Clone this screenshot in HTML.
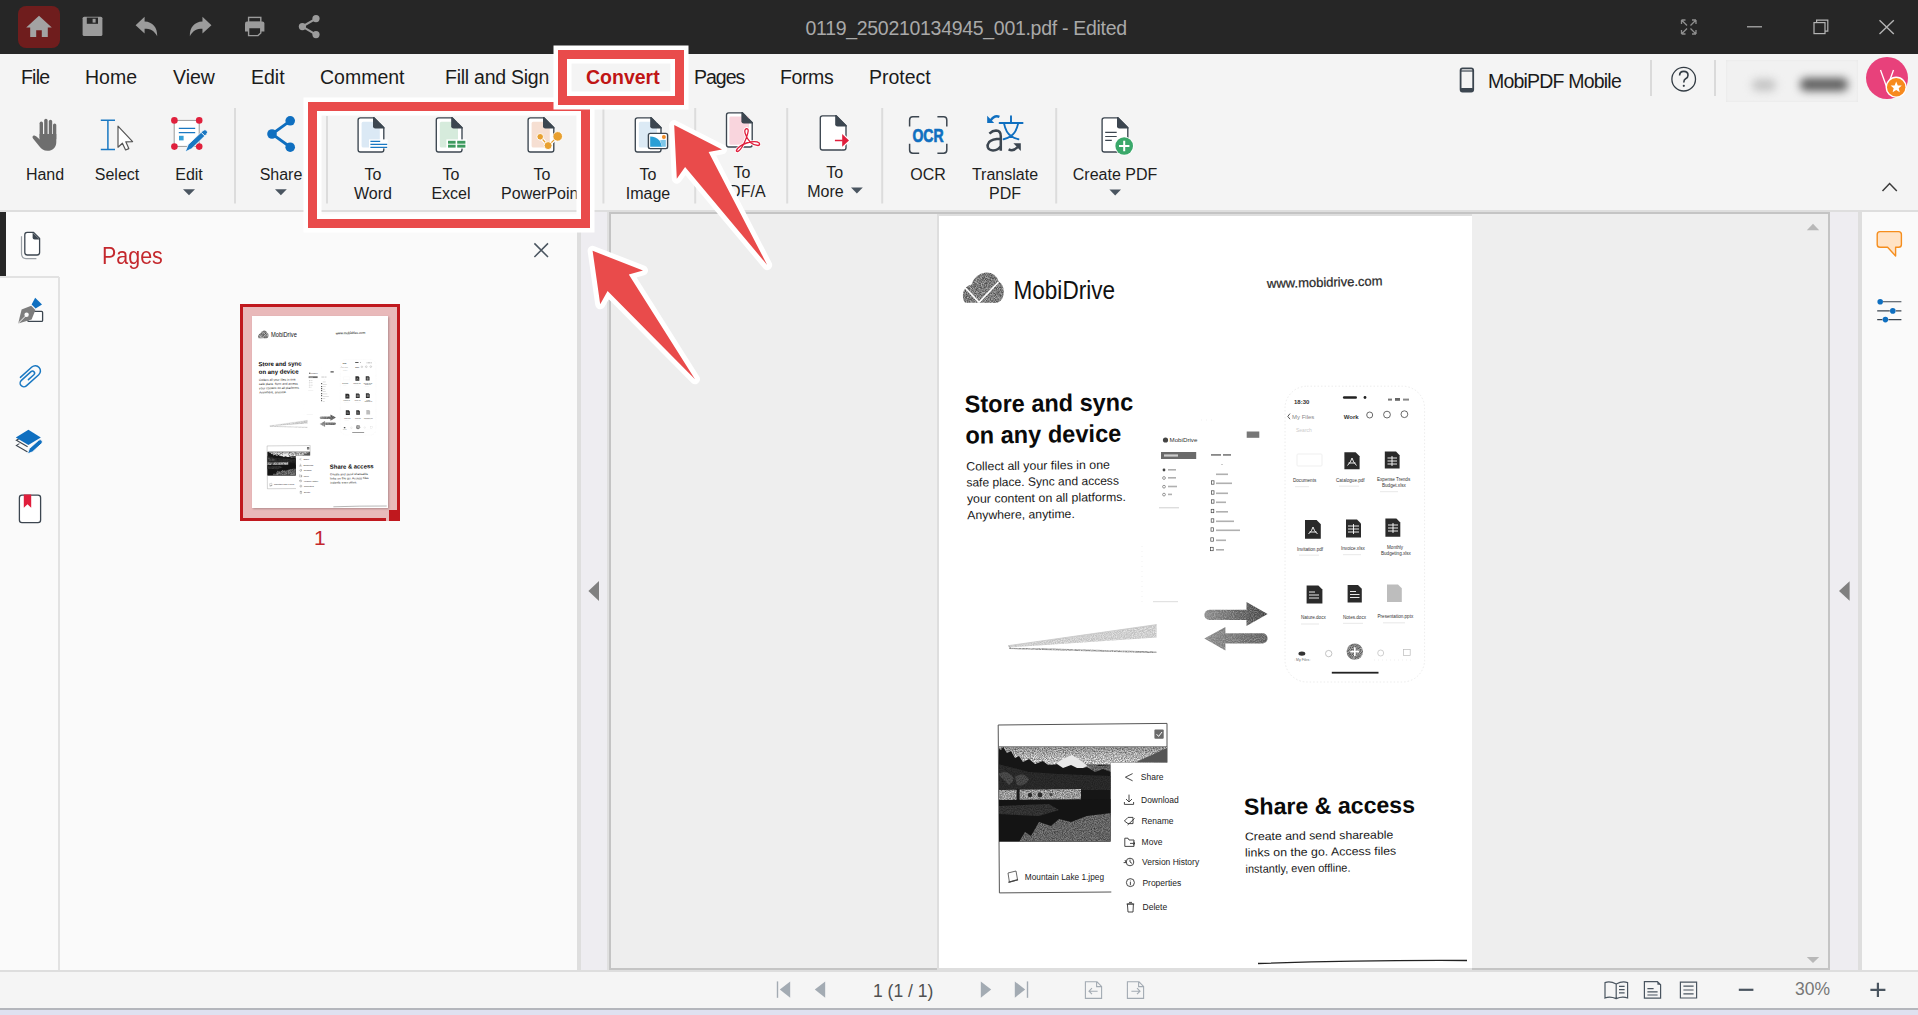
<!DOCTYPE html>
<html><head><meta charset="utf-8">
<style>
*{box-sizing:border-box}
html,body{margin:0;padding:0}
body{width:1918px;height:1015px;overflow:hidden;position:relative;background:#f4f4f4;font-family:"Liberation Sans",sans-serif;color:#1e1e1e}
.a{position:absolute}
.t{position:absolute;white-space:nowrap}
.menu{font-size:19.5px;line-height:22px;top:66px;color:#1b1b1b}
.rl{position:absolute;font-size:16px;line-height:19px;text-align:center;width:120px;white-space:nowrap;color:#1e1e1e}
svg{position:absolute;left:0;top:0;overflow:visible}
</style></head><body>
<!-- title bar -->
<div class="a" style="left:0;top:0;width:1918px;height:54px;background:#262626"></div>
<div class="a" style="left:18px;top:6px;width:42px;height:42px;border-radius:8px;background:#6f1d1d"></div>
<div class="t" id="title" style="left:805.5px;top:17px;letter-spacing:-0.3px;font-size:19.5px;line-height:22px;color:#a9a9a9">0119_250210134945_001.pdf - Edited</div>

<!-- menu -->
<div class="t menu" style="left:21px;letter-spacing:-0.8px">File</div>
<div class="t menu" style="left:85px">Home</div>
<div class="t menu" style="left:173px">View</div>
<div class="t menu" style="left:251px">Edit</div>
<div class="t menu" style="left:320px">Comment</div>
<div class="t menu" style="left:445px;letter-spacing:-0.25px">Fill and Sign</div>
<div class="t menu" style="left:586px;font-weight:bold;color:#c01515">Convert</div>
<div class="t menu" style="left:694px;letter-spacing:-1px">Pages</div>
<div class="t menu" style="left:780px;letter-spacing:-0.4px">Forms</div>
<div class="t menu" style="left:869px">Protect</div>
<div class="t menu" style="left:1488px;top:70px;letter-spacing:-0.8px">MobiPDF Mobile</div>


<div class="a" style="left:1726px;top:60px;width:132px;height:42px;background:#f1f1f1;box-shadow:inset 0 0 3px rgba(0,0,0,0.05)"></div>
<div class="a" style="left:1752px;top:79px;width:24px;height:12px;border-radius:6px;background:#c4c4c4;filter:blur(4px)"></div>
<div class="a" style="left:1800px;top:78px;width:48px;height:13px;border-radius:6px;background:#5e5e5e;filter:blur(4px)"></div>
<!-- ribbon labels -->
<div class="rl" style="left:-15px;top:165px">Hand</div>
<div class="rl" style="left:57px;top:165px">Select</div>
<div class="rl" style="left:129px;top:165px">Edit</div>
<div class="rl" style="left:221px;top:165px">Share</div>
<div class="rl" style="left:313px;top:165px">To<br>Word</div>
<div class="rl" style="left:391px;top:165px">To<br>Excel</div>
<div class="rl" style="left:482px;top:165px">To<br>PowerPoint</div>
<div class="rl" style="left:588px;top:165px">To<br>Image</div>
<div class="rl" style="left:682px;top:163px">To<br>PDF/A</div>
<div class="rl" style="left:774.7px;top:163px">To<br><span style="padding-right:18.5px">More</span></div>
<div class="rl" style="left:868px;top:165px">OCR</div>
<div class="rl" style="left:945px;top:165px">Translate<br>PDF</div>
<div class="rl" style="left:1055px;top:165px">Create PDF</div>

<!-- ribbon bottom border -->
<div class="a" style="left:0;top:210px;width:1918px;height:2px;background:#dedede"></div>

<!-- left icon column -->
<div class="a" style="left:0;top:212px;width:59px;height:760px;background:#fafafa"></div>
<div class="a" style="left:0;top:212px;width:6px;height:65px;background:#262626"></div>
<div class="a" style="left:0;top:276px;width:59px;height:2px;background:#e2e2e2"></div>
<div class="a" style="left:58px;top:277px;width:2px;height:695px;background:#e2e2e2"></div>
<!-- pages panel -->
<div class="a" style="left:59px;top:212px;width:518px;height:65px;background:#fafafa"></div><div class="a" style="left:60px;top:277px;width:517px;height:695px;background:#fafafa"></div>
<div class="t" style="left:102px;top:241px;font-size:24.5px;line-height:30px;color:#c4282d;transform:scaleX(0.875);transform-origin:0 0">Pages</div>

<!-- thumbnail -->
<div class="a" style="left:240px;top:304px;width:160px;height:217px;background:#e9b9ba;border:3px solid #c0181e"></div>
<div class="a" style="left:389px;top:510px;width:11px;height:11px;background:#c0181e"></div>
<div class="a" style="left:386px;top:505px;width:3px;height:16px;background:#e9b9ba"></div>
<div class="a" id="thumbpage" style="left:252px;top:316px;width:136px;height:192px;background:#fff;box-shadow:1px 1px 2px rgba(0,0,0,0.25)"></div>
<svg width="136" height="192" viewBox="0 0 533 752" style="left:252px;top:316px"><use href="#pg"/></svg>
<div class="t" style="left:314px;top:526px;font-size:21px;line-height:24px;color:#c4282d">1</div>
<!-- splitter -->
<div class="a" style="left:577px;top:212px;width:4px;height:760px;background:#dedede"></div>
<div class="a" style="left:581px;top:212px;width:26px;height:760px;background:#eeedf1"></div>
<div class="a" style="left:607px;top:212px;width:2px;height:760px;background:#e0e0e0"></div>
<!-- viewer -->
<div class="a" style="left:609px;top:212px;width:1221px;height:758px;background:#eeeeee;border-left:2px solid #c4c4c4;border-top:2px solid #c4c4c4;border-right:2px solid #c4c4c4;border-bottom:2px solid #c4c4c4"></div>
<!-- right splitter -->
<div class="a" style="left:1830px;top:212px;width:28px;height:760px;background:#eeedf1"></div>
<div class="a" style="left:1858px;top:212px;width:4px;height:760px;background:#dedede"></div>
<div class="a" style="left:1862px;top:212px;width:56px;height:760px;background:#fafafa"></div>

<!-- status bar -->
<div class="a" style="left:0;top:970px;width:1918px;height:2px;background:#dedede"></div>
<div class="a" style="left:0;top:972px;width:1918px;height:36px;background:#f5f5f5"></div>
<div class="a" style="left:0;top:1008px;width:1918px;height:2px;background:#b4b6bc"></div>
<div class="a" style="left:0;top:1010px;width:1918px;height:5px;background:#dfe1f0"></div>
<div class="t" style="left:873px;top:980px;font-size:17.5px;line-height:22px;color:#505050">1 (1 / 1)</div>
<div class="t" style="left:1795px;top:978px;font-size:17.5px;line-height:22px;color:#777">30%</div>

<!-- PAGE -->
<div class="a" id="page" style="left:937px;top:214px;width:535px;height:756px;background:#dedede"></div>
<div class="a" style="left:939px;top:216px;width:533px;height:752px;background:#fff"></div>



<svg width="533" height="752" viewBox="0 0 533 752" style="left:939px;top:216px">
 <defs>
  <filter id="grain" x="0" y="0" width="100%" height="100%">
   <feTurbulence type="fractalNoise" baseFrequency="0.9" numOctaves="2" seed="3" result="n"/>
   <feColorMatrix in="n" type="matrix" values="0 0 0 0 0  0 0 0 0 0  0 0 0 0 0  0 0 0 -1.2 1.35" result="a"/>
   <feComposite in="SourceGraphic" in2="a" operator="in"/>
  </filter>
  <filter id="grain3" x="0" y="0" width="100%" height="100%">
   <feTurbulence type="fractalNoise" baseFrequency="1.2" numOctaves="1" seed="11" result="n"/>
   <feColorMatrix in="n" type="matrix" values="0 0 0 0 0  0 0 0 0 0  0 0 0 0 0  0 0 0 -1.3 1.4" result="a"/>
   <feComposite in="SourceGraphic" in2="a" operator="in"/>
  </filter>
  <filter id="grain2" x="0" y="0" width="100%" height="100%">
   <feTurbulence type="fractalNoise" baseFrequency="1.1" numOctaves="1" seed="7" result="n"/>
   <feColorMatrix in="n" type="matrix" values="0 0 0 0 0  0 0 0 0 0  0 0 0 0 0  0 0 0 -0.8 1.3" result="a"/>
   <feComposite in="SourceGraphic" in2="a" operator="in"/>
  </filter>
  <linearGradient id="sky" x1="0" y1="0" x2="0" y2="1"><stop offset="0" stop-color="#b0b0b0"/><stop offset="0.5" stop-color="#e0e0e0"/><stop offset="1" stop-color="#f6f6f6"/></linearGradient>
  <linearGradient id="rarr" x1="0" y1="0" x2="1" y2="0"><stop offset="0" stop-color="#8a8a8a"/><stop offset="1" stop-color="#3e3e3e"/></linearGradient>
  <linearGradient id="larr" x1="0" y1="0" x2="1" y2="0"><stop offset="0" stop-color="#8a8a8a"/><stop offset="1" stop-color="#5a5a5a"/></linearGradient>
  <clipPath id="photoclip"><path d="M60,530.6 L228,530.6 L228,546.6 L171.5,546.6 L171.5,625.5 L60,625.5 Z"/></clipPath>
 </defs>
 <g id="pg" font-family="Liberation Sans">
  <!-- logo -->
  <g filter="url(#grain3)">
   <path d="M26,86.7 Q23.5,84 24,78 Q25,70.5 32.5,68.6 Q36,58 46.6,56.6 Q57,56.4 59.6,65.5 Q65.2,68.5 64.8,77 Q64.2,84.5 58.5,86.7 Z" fill="#505050"/>
  </g>
  <path d="M24.5,70 L40,86.4 L59.5,66" fill="none" stroke="#fff" stroke-width="1.6"/>
  <text x="74.5" y="83.1" font-size="25.5" fill="#111" textLength="101.5" lengthAdjust="spacingAndGlyphs">MobiDrive</text>
  <text x="328.1" y="72" font-size="13" fill="#2a2a2a" stroke="#2a2a2a" stroke-width="0.25" textLength="115.6" lengthAdjust="spacingAndGlyphs" transform="rotate(-1.3 328.1 72)">www.mobidrive.com</text>
  <!-- heading 1 -->
  <g transform="rotate(-0.7 26 196)">
   <text x="25.8" y="196.5" font-size="24.3" font-weight="bold" fill="#0a0a0a" textLength="168.5" lengthAdjust="spacingAndGlyphs">Store and sync</text>
   <text x="26" y="227.6" font-size="24.3" font-weight="bold" fill="#0a0a0a" textLength="156" lengthAdjust="spacingAndGlyphs">on any device</text>
   <g font-size="12" fill="#1a1a1a">
    <text x="26.5" y="254.5" textLength="143.8" lengthAdjust="spacingAndGlyphs">Collect all your files in one</text>
    <text x="26.5" y="270.6" textLength="152.5" lengthAdjust="spacingAndGlyphs">safe place. Sync and access</text>
    <text x="26.8" y="286.9" textLength="159" lengthAdjust="spacingAndGlyphs">your content on all platforms.</text>
    <text x="27" y="303.2" textLength="107.5" lengthAdjust="spacingAndGlyphs">Anywhere, anytime.</text>
   </g>
  </g>
  <!-- heading 2 -->
  <g transform="rotate(-0.7 305 598)">
   <text x="305.1" y="598.7" font-size="23.3" font-weight="bold" fill="#0a0a0a" textLength="171" lengthAdjust="spacingAndGlyphs">Share &amp; access</text>
   <g font-size="11.5" fill="#1a1a1a">
    <text x="305.6" y="624.4" textLength="148.4" lengthAdjust="spacingAndGlyphs">Create and send shareable</text>
    <text x="305.6" y="640.6" textLength="151.2" lengthAdjust="spacingAndGlyphs">links on the go. Access files</text>
    <text x="305.8" y="656.9" textLength="105" lengthAdjust="spacingAndGlyphs">instantly, even offline.</text>
   </g>
  </g>

  <!-- laptop base -->
  <path d="M69,429.7 L217.6,408.6 L217.6,421.5 L70,431.5 Z" fill="#c0c0c0" filter="url(#grain)"/>
  <path d="M69,429.7 L217.6,408.6" stroke="#c8c8c8" stroke-width="0.8" fill="none"/>
  <path d="M70,432.2 L217.6,436.3" stroke="#8a8a8a" stroke-width="1.8" fill="none" filter="url(#grain)"/>
  <path d="M71,431 Q69,430 72,432" stroke="#999" stroke-width="0.8" fill="none"/>
  <!-- laptop screen faint -->
  <g stroke="#ededed" stroke-width="0.8" fill="none" stroke-dasharray="1 4">
   <path d="M203,330 L203,388"/>
   <path d="M262,204 L275,204"/>
  </g>
  <g fill="#555">
   <circle cx="226.5" cy="224" r="2.6" fill="#444"/>
   <text x="230.5" y="226.2" font-size="6.2" fill="#333">MobiDrive</text>
   <rect x="307.7" y="215.5" width="12.6" height="6.3" fill="#777"/>
   <rect x="222" y="236" width="35.2" height="7" fill="#6a6a6a"/>
   <rect x="225" y="238.4" width="14" height="2.2" fill="#ccc"/>
  </g>
  <g fill="#b0b0b0" font-size="4">
   <circle cx="225" cy="254" r="1.4" fill="#444"/><rect x="229" y="253" width="8" height="1.6"/>
   <circle cx="225" cy="262" r="1.4" fill="none" stroke="#555" stroke-width="0.6"/><rect x="229" y="261" width="8" height="1.6"/>
   <circle cx="225" cy="270.7" r="1.4" fill="none" stroke="#555" stroke-width="0.6"/><rect x="229" y="269.7" width="9" height="1.6"/>
   <circle cx="225" cy="278.6" r="1.4" fill="none" stroke="#555" stroke-width="0.6"/><rect x="229" y="277.6" width="4" height="1.6"/>
   <rect x="220" y="291" width="20" height="1.4" fill="#ddd"/>
   <rect x="272" y="238" width="10" height="1.8" fill="#888"/><rect x="284" y="238" width="8" height="1.8" fill="#888"/>
   <rect x="282" y="248" width="2" height="1" fill="#ccc"/>
   <rect x="277" y="257.5" width="12" height="1.6"/>
   <rect x="277" y="266.5" width="16" height="1.6"/>
   <rect x="277" y="276.5" width="12" height="1.6"/>
   <rect x="277" y="285.5" width="10" height="1.6"/>
   <rect x="277" y="295" width="12" height="1.6"/>
   <rect x="277" y="304.5" width="18" height="1.6"/>
   <rect x="277" y="313.5" width="24" height="1.6"/>
   <rect x="277" y="323.5" width="10" height="1.6"/>
   <rect x="277" y="333" width="8" height="1.6"/>
  </g>
  <g fill="none" stroke="#444" stroke-width="0.7">
   <rect x="272.4" y="264.8" width="2.6" height="3.4"/><rect x="272.4" y="274.8" width="2.6" height="3.4"/>
   <rect x="272.4" y="283.8" width="2.6" height="3.4"/><rect x="272.2" y="293.3" width="2.6" height="3.4"/>
   <rect x="272.2" y="302.8" width="2.6" height="3.4"/><rect x="272" y="311.8" width="2.6" height="3.4"/>
   <rect x="271.8" y="321.8" width="2.6" height="3.4"/><rect x="271.6" y="331.3" width="2.6" height="3.4"/>
  </g>
  <rect x="214" y="385" width="25" height="1.2" fill="#e2e2e2"/>
  <!-- arrows -->
  <g filter="url(#grain2)">
   <path d="M270.4,393.7 L307.5,393.7 L307.5,385.9 L328.6,398 L307.5,410.1 L307.5,403.9 L270.4,403.9 A5.1,5.1 0 0 1 270.4,393.7 Z" fill="url(#rarr)"/>
   <path d="M286.4,410.9 L286.4,417.2 L323.5,417.2 A5.1,5.1 0 0 1 323.5,427.4 L286.4,427.4 L286.4,434.4 L265.3,422.6 Z" fill="url(#larr)"/>
  </g>
  <!-- phone -->
  <rect x="346" y="170.2" width="139.6" height="295.8" rx="22" fill="none" stroke="#ececec" stroke-width="1" stroke-dasharray="1.5 2"/>
  <g font-size="5.5" fill="#333">
   <text x="355" y="187.5" font-weight="bold" font-size="6">18:30</text>
   <rect x="403.9" y="180.2" width="14.1" height="2.6" rx="1.3" fill="#222"/>
   <circle cx="426" cy="181.5" r="1.4" fill="#222"/>
   <rect x="449" y="182.6" width="4" height="2" fill="#777"/><rect x="456" y="182" width="5" height="2.8" fill="#666"/><rect x="464" y="182.6" width="6" height="2" fill="#888"/>
   <path d="M351,197.6 L348.8,200.4 L351,203.2" fill="none" stroke="#444" stroke-width="0.9"/>
   <text x="353" y="203" fill="#888" font-size="6">My Files</text>
   <text x="404.8" y="202.6" font-weight="bold" font-size="6">Work</text>
   <circle cx="430.7" cy="199" r="3" fill="none" stroke="#444" stroke-width="0.8"/>
   <circle cx="448" cy="198.6" r="3.4" fill="none" stroke="#444" stroke-width="0.8"/>
   <circle cx="465.4" cy="198.2" r="3.4" fill="none" stroke="#444" stroke-width="0.8"/>
   <text x="357" y="215.5" fill="#ccc" font-size="5">Search</text>
  </g>
  <!-- phone grid icons -->
  <g fill="#2a2a2a">
   <path d="M405.4,236.2 L416.6,236.2 L420.6,240.2 L420.6,253.3 L405.4,253.3 Z"/>
   <path d="M445.8,235.6 L457,235.6 L460.6,239.2 L460.6,252.6 L445.8,252.6 Z"/>
   <path d="M366,304 L377.6,304 L381.8,308.2 L381.8,322.7 L366,322.7 Z"/>
   <path d="M407,303.4 L418,303.4 L422,307.4 L422,321.6 L407,321.6 Z"/>
   <path d="M446.4,302.6 L457.4,302.6 L461.3,306.5 L461.3,320.8 L446.4,320.8 Z"/>
   <path d="M367.6,369.6 L379.4,369.6 L383.4,373.6 L383.4,387.4 L367.6,387.4 Z"/>
   <path d="M408.6,369 L419,369 L422.8,372.8 L422.8,386.6 L408.6,386.6 Z"/>
  </g>
  <path d="M448,368.4 L459,368.4 L462.8,372.2 L462.8,386 L448,386 Z" fill="#bdbdbd"/>
  <g stroke="#fff" stroke-width="0.9" fill="none">
   <path d="M448.5,242 L458,242 M448.5,245 L458,245 M448.5,248 L458,248 M453,240 L453,250"/>
   <path d="M409,310 L420,310 M409,313 L420,313 M409,316 L420,316 M414.5,308 L414.5,318"/>
   <path d="M449,309 L459,309 M449,312 L459,312 M449,315 L459,315 M454,307 L454,317"/>
   <path d="M370,376 L376,376 M370,379 L380,379 M370,382 L380,382"/>
   <path d="M411,375.5 L417,375.5 M411,378.5 L420.5,378.5 M411,381.5 L420.5,381.5"/>
   <path d="M408.5,249.5 Q412,246 413,242 Q414,246 417.5,249.5 M409.5,247 L416.5,247"/>
   <path d="M369.5,318 Q373,315 374,311 Q375,315 378.5,318 M370.5,316 L377.5,316"/>
  </g>
  <rect x="358" y="238" width="25" height="12" rx="1" fill="none" stroke="#ebebeb" stroke-width="0.8"/>
  <g font-size="4.6" fill="#333">
   <text x="354" y="266.2">Documents</text>
   <text x="397" y="265.6">Catalogue.pdf</text>
   <text x="438" y="265">Expense Trends</text>
   <text x="443" y="271">Budget.xlsx</text>
   <text x="358" y="334.6">Invitation.pdf</text>
   <text x="402" y="333.8">Invoice.xlsx</text>
   <text x="448" y="332.6">Monthly</text>
   <text x="442" y="338.6">Budgeting.xlsx</text>
   <text x="362" y="403.2">Nature.docx</text>
   <text x="404" y="402.6">Notes.docx</text>
   <text x="438.5" y="402">Presentation.pptx</text>
  </g>
  <g fill="#ececec">
   <rect x="356" y="270" width="14" height="1.2"/><rect x="400" y="269.6" width="20" height="1.2"/><rect x="441" y="275" width="18" height="1.2"/>
   <rect x="360" y="338.6" width="20" height="1.2"/><rect x="404" y="338" width="18" height="1.2"/>
   <rect x="362" y="407.4" width="18" height="1.2"/><rect x="404" y="406.8" width="20" height="1.2"/><rect x="444" y="406.2" width="22" height="1.2"/>
  </g>
  <!-- phone bottom nav -->
  <path d="M359.6,438.4 Q362.9,434 366.2,438.4 Z" fill="#333"/>
  <ellipse cx="362.9" cy="437.6" rx="3.4" ry="2.2" fill="#333"/>
  <text x="357" y="445.4" font-size="3.6" fill="#666">My Files</text>
  <circle cx="389.7" cy="437.6" r="3.2" fill="none" stroke="#aaa" stroke-width="0.7"/>
  <circle cx="415.8" cy="435.6" r="8.2" fill="#555" filter="url(#grain)"/>
  <path d="M411.4,435.6 L420.2,435.6 M415.8,431.2 L415.8,440" stroke="#fff" stroke-width="1.6"/>
  <circle cx="441.7" cy="437" r="3" fill="none" stroke="#bbb" stroke-width="0.7"/>
  <rect x="464.6" y="433.6" width="6.6" height="6" fill="none" stroke="#bbb" stroke-width="0.7"/>
  <rect x="392.8" y="455.8" width="46.7" height="1.8" fill="#222"/>
  <g stroke="#e4e4e4" stroke-width="0.6" stroke-dasharray="1 3" fill="none">
   <path d="M355,444 L375,444"/><path d="M435,444 L475,444"/>
  </g>
  <!-- photo card -->
  <path d="M59.2,509 L228,507.4 L228,546.6 M59.2,509 L60.4,676.9 L172.3,676" fill="none" stroke="#555" stroke-width="1"/>
  <g clip-path="url(#photoclip)">
   <rect x="59" y="530" width="170" height="96" fill="#1c1c1c"/>
   <rect x="59" y="530.6" width="170" height="18" fill="url(#sky)" filter="url(#grain)"/>
   <path d="M112,552 L122,544 L128,541 L133,539 L138,542 L146,548 L152,552 Z" fill="#e8e8e8"/>
   <path d="M138,556 L152,547 L160,550 L172,549 L228,546 L228,560 L138,560 Z" fill="#7a7a7a" filter="url(#grain)"/>
   <path d="M196,546.6 L228,532 L228,546.6 Z" fill="#555"/>
   <path d="M59,532 L62,534 L64,531 L68,537 L72,535 L76,542 L80,540 L84,546 L90,543 L96,548 L104,545 L110,550 L118,548 L124,552 L132,549 L140,553 L148,551 L156,556 L164,553 L172,556 L172,600 L59,600 Z" fill="#161616"/>
   <path d="M59,548 L75,552 L90,556 L120,558 L172,560 L172,574 L59,574 Z" fill="#2e2e2e" filter="url(#grain)"/>
   <path d="M59,558 Q66,553 72,559 Q78,563 70,569 Z M76,561 Q84,555 90,563 Q86,571 78,569 Z" fill="#505050" filter="url(#grain)"/>
   <path d="M59,574 L142,573 L142,584 L59,585 Z" fill="#c4c4c4" filter="url(#grain)"/>
   <circle cx="91" cy="579" r="2.2" fill="#2a2a2a"/><circle cx="101" cy="579" r="2.4" fill="#2a2a2a"/><circle cx="112" cy="578.6" r="1.6" fill="#444"/>
   <rect x="77.6" y="573" width="3" height="11" fill="#1a1a1a"/>
   <path d="M59,584 L172,583 L172,626 L59,626 Z" fill="#141414"/>
   <path d="M59,590 L110,588 L120,594 L100,600 L59,598 Z" fill="#3a3a3a" filter="url(#grain)"/>
   <path d="M80,626 L86,616 L92,620 L100,606 L112,610 L120,603 L132,606 L148,600 L172,597 L172,626 Z" fill="#7e7e7e" filter="url(#grain)"/>
  </g>
  <rect x="215.4" y="513.5" width="9.3" height="9.3" rx="1" fill="#6a6a6a"/>
  <path d="M217.6,518.2 L219.6,520.4 L223,516" fill="none" stroke="#fff" stroke-width="1"/>
  <g fill="none" stroke="#444" stroke-width="0.8">
   <path d="M69,657 L77,655 L78.6,664 L70.4,666 Z"/>
   <path d="M69.4,666.4 L79,663.6" stroke-width="1.4"/>
  </g>
  <text x="85.8" y="663.6" font-size="8.5" fill="#222" textLength="79.2" lengthAdjust="spacingAndGlyphs">Mountain Lake 1.jpeg</text>
  <!-- context menu -->
  <g font-size="8.5" fill="#222">
   <text x="201.8" y="564">Share</text>
   <text x="202" y="587">Download</text>
   <text x="202.4" y="608">Rename</text>
   <text x="202.6" y="629">Move</text>
   <text x="203" y="649">Version History</text>
   <text x="203.4" y="670">Properties</text>
   <text x="203.6" y="694">Delete</text>
  </g>
  <g fill="none" stroke="#333" stroke-width="0.9">
   <path d="M193.6,557.6 L186.4,561.2 L193.6,564.8"/>
   <path d="M190,578.6 L190,585.8 M187,583 L190,586 L193,583 M185.4,586 L185.4,588.4 L194.6,588.4 L194.6,586"/>
   <path d="M185.4,605 L189,601.4 L194,601.4 L194,607.6 L189,607.6 Z M188.6,609 L195.6,602.4"/>
   <path d="M185.8,622.2 L185.8,630.4 L195,630.4 L195,624 L190,624 L189,622.2 Z M191,627.4 L196,627.4 M194,625.6 L196,627.4 L194,629.2"/>
   <circle cx="191" cy="646" r="3.8"/><path d="M191,643.6 L191,646 L193,647.4 M186,644 L187.2,646.6 L184.6,646.6"/>
   <circle cx="191.4" cy="666.6" r="4"/><path d="M191.4,665.6 L191.4,669.2 M191.4,663.8 L191.4,664.4"/>
   <path d="M188.4,688 L194.4,688 L194,696 L189,696 Z M187.6,688 L195.2,688 M190,686.4 L193,686.4"/>
  </g>

  <!-- bottom line -->
  <path d="M319,747.5 Q420,744 528,744.5" fill="none" stroke="#222" stroke-width="1.3"/>
 </g>
</svg>

<!-- ICONS -->
<svg width="1918" height="1015" viewBox="0 0 1918 1015">
 <!-- title bar icons -->
 <path d="M26.2,27.6 L39,15.8 L51.8,27.6 L47.8,27.6 L47.8,37 L41.8,37 L41.8,30.2 L36.2,30.2 L36.2,37 L30.2,37 L30.2,27.6 Z" fill="#a3a3a3"/>
 <rect x="82.6" y="16.7" width="19.8" height="19.4" rx="1.6" fill="#9b9b9b"/>
 <rect x="86.8" y="17.6" width="11.2" height="6.2" fill="#262626"/>
 <rect x="92.6" y="18.8" width="3" height="3.8" fill="#9b9b9b"/>
 <path id="undo" d="M135.6,25.2 L144.6,16.7 L144.6,21.4 C152.6,21.6 157.6,27.4 157.2,36.2 C154.2,30.6 150.2,28.8 144.6,28.8 L144.6,33.6 Z" fill="#9b9b9b"/>
 <use href="#undo" transform="translate(347.05,0) scale(-1,1)"/>
 <rect x="248.6" y="17.4" width="12.2" height="5" fill="none" stroke="#9b9b9b" stroke-width="1.4"/>
 <path d="M245,23.5 Q245,21.5 247,21.5 L262.4,21.5 Q264.4,21.5 264.4,23.5 L264.4,31.5 L245,31.5 Z" fill="#9b9b9b"/>
 <path d="M248.6,27.6 L260.8,27.6 L260.8,33 L258,35.6 L248.6,35.6 Z" fill="#262626" stroke="#9b9b9b" stroke-width="1.4"/>
 <g fill="#9b9b9b"><circle cx="316" cy="18.6" r="3.6"/><circle cx="302.4" cy="26.6" r="3.6"/><circle cx="316" cy="34.6" r="3.6"/></g>
 <path d="M316,18.6 L302.4,26.6 L316,34.6" fill="none" stroke="#9b9b9b" stroke-width="2.2"/>
 <!-- window controls -->
 <g fill="none" stroke="#8e8e8e" stroke-width="1.3">
  <path d="M1681.5,20 L1687,25.5 M1681.5,20 L1681.5,24 M1681.5,20 L1685.5,20"/>
  <path d="M1696,20 L1690.5,25.5 M1696,20 L1696,24 M1696,20 L1692,20"/>
  <path d="M1681.5,34 L1687,28.5 M1681.5,34 L1681.5,30 M1681.5,34 L1685.5,34"/>
  <path d="M1696,34 L1690.5,28.5 M1696,34 L1696,30 M1696,34 L1692,34"/>
 </g>
 <path d="M1747,26.8 L1762,26.8" stroke="#b4b4b4" stroke-width="1.2"/>
 <g fill="none" stroke="#b4b4b4" stroke-width="1.2">
  <rect x="1814" y="22.6" width="11" height="11"/>
  <path d="M1816.6,22.6 L1816.6,20.2 L1827.8,20.2 L1827.8,31.2 L1825,31.2"/>
 </g>
 <path d="M1879.5,20.2 L1893.8,34 M1893.8,20.2 L1879.5,34" stroke="#b4b4b4" stroke-width="1.4"/>

 <!-- menu right -->
 <rect x="1460.6" y="68.3" width="12.6" height="23.2" rx="2" fill="none" stroke="#3c4650" stroke-width="1.8"/>
 <path d="M1460.6,71 L1473.2,71" stroke="#3c4650" stroke-width="1.2"/><rect x="1460.6" y="88" width="12.6" height="3.4" rx="1" fill="#3c4650"/>
 <rect x="1650" y="60" width="2" height="36" fill="#dadada"/>
 <circle cx="1683.7" cy="79.2" r="11.8" fill="none" stroke="#333c44" stroke-width="1.3"/>
 <path d="M1679.6,75.6 Q1679.6,71.4 1683.8,71.4 Q1688,71.4 1688,75.2 Q1688,77.6 1685.6,78.8 Q1683.8,79.8 1683.8,82.4" fill="none" stroke="#333c44" stroke-width="1.6"/>
 <circle cx="1683.8" cy="85.8" r="1.1" fill="#333c44"/>
 <rect x="1714" y="60" width="2" height="36" fill="#dadada"/>
 <circle cx="1887" cy="78" r="21" fill="#e8417b"/>
 <path d="M1880.5,70 L1887,88 L1893.5,70" fill="none" stroke="#fff" stroke-width="1.3"/>
 <circle cx="1896.2" cy="87.2" r="10.6" fill="#fff"/>
 <circle cx="1896.2" cy="87.2" r="9.2" fill="#f78a1e"/>
 <path d="M1896.2,81.4 L1897.8,85.4 L1901.8,85.6 L1898.7,88.2 L1899.8,92.3 L1896.2,90 L1892.6,92.3 L1893.7,88.2 L1890.6,85.6 L1894.6,85.4 Z" fill="#fff"/>
 <!-- collapse chevron -->
 <path d="M1882.5,191 L1889.6,183.6 L1896.8,191" fill="none" stroke="#3a3a3a" stroke-width="1.5"/>
</svg>


<!-- RIBBON ICONS -->
<svg width="1918" height="1015" viewBox="0 0 1918 1015">
 <defs>
  <g id="doc">
   <path d="M1.5,3 Q1.5,0.8 3.7,0.8 L17.2,0.8 L27.2,10.8 L27.2,32.8 Q27.2,35 25,35 L3.7,35 Q1.5,35 1.5,32.8 Z" fill="#fff" stroke="#3c4650" stroke-width="1.35" stroke-linejoin="round"/>
  </g>
  <g id="fold"><path d="M16.4,0.08 L17.5,0.08 L27.92,10.5 L27.92,11.6 L18.8,11.6 Q16.4,11.6 16.4,9.2 Z" fill="#3c4650"/></g>
 </defs>
 <!-- Hand -->
 <g fill="#6e6e6e">
  <rect x="39.6" y="121.6" width="3.4" height="18" rx="1.7"/>
  <rect x="44.2" y="118.7" width="3.4" height="20" rx="1.7"/>
  <rect x="48.8" y="119.8" width="3.4" height="19" rx="1.7"/>
  <rect x="53" y="123.4" width="3.3" height="17" rx="1.65"/>
  <path d="M39.6,134 L56.3,134 L56.3,142 C56.3,147.5 52.5,150.8 47.5,150.8 C43.5,150.8 41.5,149 39.5,146.5 L33,138.5 C32,137.2 32.6,135.6 34,135.6 C35.2,135.6 36.4,136.4 39.6,139.4 Z"/>
 </g>
 <!-- Select -->
 <g stroke="#1a78c2" stroke-width="1.5" fill="none">
  <path d="M100.8,120.2 L115,120.2 M107.9,120.2 L107.9,149.6 M100.8,149.6 L115,149.6"/>
 </g>
 <path d="M118,126.2 L118,147.2 L122.4,143.2 L125.6,150 L128.8,148.6 L125.8,141.8 L132.6,141.6 Z" fill="#fff" stroke="#555" stroke-width="1.2" stroke-linejoin="round"/>
 <!-- Edit -->
 <rect x="174.2" y="120.4" width="25" height="26" fill="#fff" stroke="#9a9a9a" stroke-width="1"/>
 <path d="M178.8,128.4 L195.2,128.4 M178.8,132.6 L195.2,132.6" stroke="#1a78c2" stroke-width="1.3"/>
 <rect x="179" y="135.8" width="4.6" height="4.6" fill="#35a0d8"/>
 <g fill="#e0203c"><circle cx="174.4" cy="120.4" r="3.3"/><circle cx="199.2" cy="120.4" r="3.3"/><circle cx="174.4" cy="146.6" r="3.3"/><circle cx="199.2" cy="146.6" r="3.3"/></g>
 <path d="M185.2,152 L188.2,144.6 L203,130.6 Q205,128.8 206.8,130.6 Q208.4,132.4 206.6,134.2 L191.8,148.6 Z" fill="#1a78c2" stroke="#fff" stroke-width="0.8"/>
 <path d="M201.2,132.4 L204.8,136" stroke="#fff" stroke-width="1"/>
 <!-- dropdowns -->
 <g fill="#4a5560">
  <path d="M183,189.2 L195,189.2 L189,195.2 Z"/>
  <path d="M275,189.2 L286.8,189.2 L280.9,195.2 Z"/>
  <path d="M851,187.4 L862.8,187.4 L856.9,193.4 Z"/>
  <path d="M1109.4,189.6 L1121,189.6 L1115.2,195.6 Z"/>
 </g>
 <!-- separators -->
 <g fill="#dcdcdc">
  <rect x="234" y="108" width="2" height="95.5"/>
  <rect x="326" y="116" width="2" height="87.5"/>
  <rect x="602.4" y="108" width="2" height="95.5"/>
  <rect x="694.2" y="108" width="2" height="95.5"/>
  <rect x="786.2" y="108" width="2" height="95.5"/>
  <rect x="881.2" y="108" width="2" height="95.5"/>
  <rect x="1055.2" y="108" width="2" height="95.5"/>
 </g>
 <!-- Share -->
 <path d="M290.2,120.8 L272,134 L290.2,147" fill="none" stroke="#0f6fc0" stroke-width="2.8"/>
 <g fill="#0f6fc0"><circle cx="290.2" cy="120.8" r="4.8"/><circle cx="272" cy="134" r="4.8"/><circle cx="290.2" cy="147.2" r="4.8"/></g>
 <!-- To Word -->
 <g transform="translate(356.6,117)">
  <use href="#doc"/>
  <rect x="5" y="4.8" width="18.2" height="25.8" rx="1.6" fill="#dbe9f5"/>
  <use href="#fold"/>
  <rect x="12.4" y="22.4" width="18.6" height="9" fill="#fff"/>
  <path d="M13.8,24.4 L23.6,24.4 M13.8,27.4 L30.6,27.4 M13.8,30.3 L30.6,30.3" stroke="#1a78c2" stroke-width="1.3"/>
 </g>
 <!-- To Excel -->
 <g transform="translate(434.8,117)">
  <use href="#doc"/>
  <rect x="5" y="4.8" width="18.2" height="25.8" rx="1.6" fill="#d6ebdc"/>
  <use href="#fold"/>
  <rect x="11.6" y="22.4" width="20.4" height="9.2" fill="#fff"/>
  <g fill="#3d9a5e">
   <rect x="13.2" y="23.8" width="7.6" height="2.9"/><rect x="22.4" y="23.8" width="8.2" height="2.9"/>
   <rect x="13.2" y="27.7" width="7.6" height="2.9"/><rect x="22.4" y="27.7" width="8.2" height="2.9"/>
  </g>
 </g>
 <!-- To PowerPoint -->
 <g transform="translate(526.6,117)">
  <use href="#doc"/>
  <rect x="5" y="4.8" width="18.2" height="25.8" rx="1.6" fill="#f6dfd2"/>
  <use href="#fold"/>
  <path d="M13.6,19.8 L21.6,28.6 L31.2,19.4" fill="none" stroke="#fff" stroke-width="3.4"/>
  <path d="M13.6,19.8 L21.6,28.6 L31.2,19.4" fill="none" stroke="#e8a030" stroke-width="1.3"/>
  <g fill="#e8a030" stroke="#fff" stroke-width="0.9"><circle cx="13.6" cy="19.8" r="3.3"/><circle cx="31.1" cy="19.4" r="4.8"/><circle cx="21.5" cy="28.6" r="4"/></g>
 </g>
 <!-- To Image -->
 <g transform="translate(633.8,117)">
  <use href="#doc"/>
  <rect x="5" y="4.8" width="18.2" height="25.8" rx="1.6" fill="#dceaf5"/>
  <use href="#fold"/>
  <rect x="14.6" y="16.4" width="19.2" height="15.2" rx="1.8" fill="#fff" stroke="#3c4650" stroke-width="1.4"/>
  <path d="M16.4,19.6 Q22,19.6 25.6,23.4 Q27.6,26 28.2,29.8 L16.4,29.8 Z" fill="#2a9fd6"/>
  <path d="M26,23.4 Q29.6,22.2 32,23 L32,29.8 L28.2,29.8 Q27.8,26 26,23.4 Z" fill="#7ec6e8"/>
  <circle cx="30.1" cy="20" r="2" fill="#f08a24"/>
 </g>
 <!-- To PDF/A -->
 <g transform="translate(725,112)">
  <use href="#doc"/>
  <path d="M4.4,6 Q4.4,4.6 5.8,4.6 L24,4.6 L24,20 Q24,32.8 12,32.8 L5.8,32.8 Q4.4,32.8 4.4,31.4 Z" fill="#f9d5dd"/>
  <use href="#fold"/>
 </g>
 <path id="acro" d="M746.5,128.6 Q744,129.5 745.2,133.5 Q746.5,138 750.5,142.5 Q754,145.5 758,145.5 Q760.5,145 759.2,143 Q757,141 750,142 Q743,143.5 738,148 Q735,151.5 737.5,151.5 Q740,151 743.5,144.5 Q747.5,136 748.2,131 Q748.2,128.5 746.5,128.6 Z" fill="none" stroke="#fff" stroke-width="3"/>
 <path d="M746.5,128.6 Q744,129.5 745.2,133.5 Q746.5,138 750.5,142.5 Q754,145.5 758,145.5 Q760.5,145 759.2,143 Q757,141 750,142 Q743,143.5 738,148 Q735,151.5 737.5,151.5 Q740,151 743.5,144.5 Q747.5,136 748.2,131 Q748.2,128.5 746.5,128.6 Z" fill="none" stroke="#e01e3c" stroke-width="1.3"/>
 <!-- To More -->
 <g transform="translate(818.8,115)">
  <use href="#doc"/>
  <use href="#fold"/>
  <path d="M23.4,19 L30.2,25.5 L23.4,31.8 Z" fill="#fff" stroke="#fff" stroke-width="2.4"/>
  <path d="M16.1,25.5 L24,25.5" stroke="#e01e3c" stroke-width="1.5"/>
  <path d="M23.4,19 L30.2,25.5 L23.4,31.8 Z" fill="#e01e3c"/>
 </g>
 <!-- OCR -->
 <g fill="none" stroke="#3c4650" stroke-width="1.5">
  <path d="M909.6,126.4 L909.6,120 Q909.6,116.8 912.8,116.8 L919.2,116.8"/>
  <path d="M937.4,116.8 L943.6,116.8 Q946.8,116.8 946.8,120 L946.8,126.4"/>
  <path d="M909.6,143.8 L909.6,150 Q909.6,153.2 912.8,153.2 L919.2,153.2"/>
  <path d="M937.4,153.2 L943.6,153.2 Q946.8,153.2 946.8,150 L946.8,143.8"/>
 </g>
 <text x="912.4" y="141.8" font-family="Liberation Sans" font-weight="bold" font-size="18.2" fill="#0f6fc0" stroke="#0f6fc0" stroke-width="0.7" transform="translate(912.4,0) scale(0.77,1) translate(-912.4,0)">OCR</text>
 <!-- Translate -->
 <path d="M989.4,133.6 Q992.6,130.6 996,130.6 Q1000.8,130.8 1000.8,136.2 L1000.8,150.8 M1000.8,138.8 Q992,138.8 989,142.2 Q987,144.6 987.8,147.4 Q989,150.4 993,150.4 Q998.4,150.2 1000.8,146" fill="none" stroke="#3c4650" stroke-width="2.5"/>
 <g fill="none" stroke="#0f6fc0" stroke-width="1.9" stroke-linecap="round">
  <path d="M1011,116.2 L1011,122.8 M999.6,123 L1022.6,123 M1004,123.4 Q1006,133 1011,136 Q1014,138.2 1018.4,139.2 M1018.2,123.4 Q1016,133 1011,136 Q1008,138.2 1003.6,139.2"/>
 </g>
 <path d="M990.4,120.6 Q994.6,114.6 999.4,116.8" fill="none" stroke="#0f6fc0" stroke-width="2.4"/>
 <path d="M987.2,115.8 L987.2,123 L994.2,123 Z" fill="#0f6fc0"/>
 <path d="M1008.6,149.4 Q1013.4,152 1017.6,147" fill="none" stroke="#3c4650" stroke-width="2.4"/>
 <path d="M1020.8,143.2 L1020.8,151 L1013.4,143.2 Z" fill="#3c4650"/>
 <!-- Create PDF -->
 <g transform="translate(1100.6,117)">
  <use href="#doc"/>
  <use href="#fold"/>
  <path d="M4.6,15.4 L16.1,15.4 M4.6,19.5 L16.1,19.5 M4.6,23.4 L11.2,23.4" stroke="#3c4650" stroke-width="1.2"/>
 </g>
 <circle cx="1124.2" cy="146" r="9.6" fill="#fff"/>
 <circle cx="1124.2" cy="146" r="8.8" fill="#3aa86a"/>
 <path d="M1119,146 L1129.4,146 M1124.2,140.8 L1124.2,151.2" stroke="#fff" stroke-width="2"/>
</svg>


<!-- SIDE / STATUS ICONS -->
<svg width="1918" height="1015" viewBox="0 0 1918 1015">
 <!-- pages icon (active) -->
 <path d="M21.5,236.2 L21.5,253 Q21.5,258.6 26,258.6 L36.4,258.6" fill="none" stroke="#9aa0a6" stroke-width="1.2"/>
 <path d="M24.8,234.8 Q24.8,232.4 27.2,232.4 L33.6,232.4 L39.6,238.4 L39.6,252.6 Q39.6,255 37.2,255 L27.2,255 Q24.8,255 24.8,252.6 Z" fill="#fff" stroke="#3c4650" stroke-width="1.3" stroke-linejoin="round"/>
 <path d="M32.6,232.4 L39.8,239.6 L34.6,239.6 Q32.6,239.6 32.6,237.6 Z" fill="#3c4650"/>
 <!-- signature pen -->
 <rect x="27.8" y="311.4" width="14.8" height="10" rx="1" fill="#fff" stroke="#3c4650" stroke-width="1.3"/>
 <path d="M18.2,323.4 L21.6,309.6 L31.2,305.8 L35.4,310 L31.6,319.6 Z" fill="#7d7d7d"/>
 <path d="M18.2,323.4 L26,315.6" stroke="#fafafa" stroke-width="1"/>
 <circle cx="26.6" cy="314.8" r="2.2" fill="#fafafa"/>
 <path d="M31.6,304.4 L35.2,297.8 L42,304.6 L35.6,308.4 Z" fill="#0f6fc0"/>
 <!-- paperclip -->
 <path d="M-7.7,-5.8 L7.7,-5.8 A5.15,5.15 0 0 1 7.7,4.5 L-9,4.5 A3.7,3.7 0 0 1 -9,-2.9 L4,-2.9 A2.1,2.1 0 0 1 4,1.3 L-3.3,1.3" transform="translate(30,376.5) rotate(-42)" fill="none" stroke="#1a78c2" stroke-width="1.5" stroke-linecap="round"/>
 <!-- layers -->
 <path d="M19.4,438.6 L16.4,440.2 L27.6,446.8 M19.4,443.6 L16.4,445.4 L27.6,452" fill="none" stroke="#3c4650" stroke-width="1.1"/>
 <path d="M15.8,437.4 L28.4,429.8 L40.8,437.4 L28.4,445 Z" fill="#0f6fc0"/>
 <path d="M27.4,454 L29.4,448.6 L38.4,440.4 Q40.2,438.8 41.8,440.4 Q43.2,442 41.6,443.6 L32.6,451.8 Z" fill="#0f6fc0" stroke="#fafafa" stroke-width="0.9"/>
 <!-- bookmark -->
 <rect x="19.4" y="495.2" width="21.2" height="27.4" rx="2.6" fill="#fff" stroke="#3c4650" stroke-width="1.3"/>
 <path d="M23.8,494.6 L31.2,494.6 L31.2,507.8 L27.5,504.2 L23.8,507.8 Z" fill="#e01e3c"/>
 <!-- close X -->
 <path d="M534.4,243.4 L548,257 M548,243.4 L534.4,257" stroke="#4a5560" stroke-width="1.5"/>
 <!-- splitter triangles -->
 <path d="M599,581 L599,601 L588.4,591 Z" fill="#808080"/>
 <path d="M1849.6,581.2 L1849.6,600.8 L1839,591 Z" fill="#808080"/>
 <path d="M1806.8,230.2 L1819.2,230.2 L1813,223.8 Z" fill="#b8b8b8"/>
 <path d="M1806.8,956.9 L1819.2,956.9 L1813,963 Z" fill="#b8b8b8"/>
 <!-- right panel icons -->
 <path d="M1880,231.6 L1898.6,231.6 Q1901.4,231.6 1901.4,234.4 L1901.4,244.4 Q1901.4,247.2 1898.6,247.2 L1895.6,247.2 L1895.6,256 L1887.6,247.2 L1880,247.2 Q1877.2,247.2 1877.2,244.4 L1877.2,234.4 Q1877.2,231.6 1880,231.6 Z" fill="#ffe3c6" stroke="#f58e1e" stroke-width="1.4" stroke-linejoin="round"/>
 <path d="M1883,301.8 L1901.4,301.8 M1877.2,310.9 L1889.8,310.9 M1895.8,310.9 L1901.4,310.9 M1877.2,319.6 L1882.4,319.6 M1888.4,319.6 L1901.4,319.6" stroke="#3c4650" stroke-width="1.1"/>
 <g fill="#0f6fc0"><circle cx="1880.2" cy="301.8" r="2.8"/><circle cx="1892.8" cy="310.9" r="2.8"/><circle cx="1885.4" cy="319.6" r="2.8"/></g>
 <!-- status bar -->
 <g fill="#a3abb3">
  <rect x="776.8" y="981.4" width="1.4" height="16.4"/>
  <path d="M790.2,981.4 L790.2,997.8 L779.8,989.6 Z"/>
  <path d="M825.2,981.4 L825.2,997.8 L814.8,989.6 Z"/>
  <path d="M980.8,981.4 L980.8,997.8 L991.2,989.6 Z"/>
  <path d="M1014.8,981.4 L1014.8,997.8 L1025.2,989.6 Z"/>
  <rect x="1026.8" y="981.4" width="1.4" height="16.4"/>
 </g>
 <g fill="none" stroke="#a3abb3" stroke-width="1.1">
  <path d="M1085.4,981.8 L1097,981.8 L1101.6,986.4 L1101.6,998.4 L1085.4,998.4 Z M1096.6,981.8 L1096.6,986.6 L1101.6,986.6"/>
  <path d="M1097.6,991.2 L1089,991.2 M1092,988.2 L1089,991.2 L1092,994.2"/>
  <path d="M1127.4,981.8 L1139,981.8 L1143.6,986.4 L1143.6,998.4 L1127.4,998.4 Z M1138.6,981.8 L1138.6,986.6 L1143.6,986.6"/>
  <path d="M1131.4,991.2 L1140,991.2 M1137,988.2 L1140,991.2 L1137,994.2"/>
 </g>
 <g fill="none" stroke="#4a5560" stroke-width="1.2">
  <path d="M1616.2,984 Q1610,980.6 1605,982.6 L1605,998 Q1610,996 1616.2,998.6 Q1622.4,996 1627.6,998 L1627.6,982.6 Q1622.4,980.6 1616.2,984 Z M1616.2,984 L1616.2,998.6"/>
  <path d="M1619,986.4 L1624.6,986.4 M1619,989.6 L1624.6,989.6 M1619,992.8 L1624.6,992.8"/>
  <path d="M1644.4,981.6 L1657.4,981.6 L1660.6,984.8 L1660.6,998.2 L1644.4,998.2 Z"/>
  <path d="M1647.4,988.6 L1653.6,988.6 M1647.4,991.8 L1657.6,991.8 M1647.4,995 L1657.6,995"/>
  <path d="M1680.4,982.2 L1696.6,982.2 L1696.6,998 L1680.4,998 Z"/>
  <path d="M1683.4,986.2 L1693.6,986.2 M1683.4,990 L1693.6,990 M1683.4,993.8 L1693.6,993.8"/>
 </g>
 <path d="M1657.4,981.4 L1660.8,984.8 L1657.4,984.8 Z" fill="#4a5560"/>
 <path d="M1738.8,989.8 L1753.4,989.8" stroke="#4a5560" stroke-width="2.2"/>
 <path d="M1870.4,989.9 L1885.4,989.9 M1877.9,982.8 L1877.9,997" stroke="#4a5560" stroke-width="2.2"/>
</svg>


<!-- ANNOTATIONS -->
<div class="a" style="left:308px;top:102px;width:282px;height:126px;border:9px solid #e94b4b;box-shadow:0 0 0 4.5px #fff, inset 0 0 0 4.5px #fff"></div>
<div class="a" style="left:558px;top:50px;width:126px;height:55px;border:9px solid #e94b4b;box-shadow:0 0 0 4.5px #fff, inset 0 0 0 4.5px #fff"></div>
<svg width="1918" height="1015" viewBox="0 0 1918 1015">
 <path id="arr1" d="M674.2,125.1 L722,149.4 L708.6,151.9 L767.2,265 L685.1,167 L676.8,178.7 Z" fill="#fff" stroke="#fff" stroke-width="10" stroke-linejoin="round"/>
 <path d="M674.2,125.1 L722,149.4 L708.6,151.9 L767.2,265 L685.1,167 L676.8,178.7 Z" fill="#e94b4b"/>
 <path d="M592.6,250.8 L643,270.5 L628.8,274.4 L695,379.2 L607.6,291 L600.2,304.3 Z" fill="#fff" stroke="#fff" stroke-width="10" stroke-linejoin="round"/>
 <path d="M592.6,250.8 L643,270.5 L628.8,274.4 L695,379.2 L607.6,291 L600.2,304.3 Z" fill="#e94b4b"/>
</svg>

</body></html>
